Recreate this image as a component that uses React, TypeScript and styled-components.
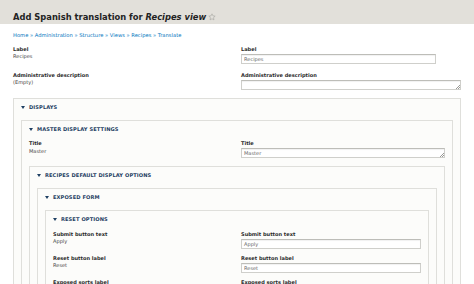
import React from "react";
import styled, { createGlobalStyle } from "styled-components";

const GlobalStyle = createGlobalStyle`
  html, body { margin: 0; padding: 0; background: #ffffff; }
  body { font-family: "DejaVu Sans", "Liberation Sans", sans-serif; color: #222; }
  * { box-sizing: border-box; }
`;

const Header = styled.header`
  background: #e2e0da;
  height: 24px;
  padding: 12px 13px 0;
`;

const Title = styled.h1`
  margin: 0;
  font-size: 8.35px;
  line-height: 10px;
  font-weight: bold;
  color: #232323;
  display: flex;
  align-items: center;
  gap: 2px;
  white-space: nowrap;
  em { font-style: italic; }
`;

const Star = styled.svg`
  width: 8px;
  height: 8px;
  margin-top: -1px;
`;

const Main = styled.main`
  padding: 7.5px 13px 0;
`;

const Breadcrumb = styled.nav`
  font-size: 5.2px;
  line-height: 7px;
  color: #0074bd;
  margin-bottom: 7px;
  white-space: nowrap;
`;

const Row = styled.div<{ $left: number; $gap: number }>`
  display: grid;
  grid-template-columns: ${(p) => p.$left}px 1fr;
  margin-bottom: ${(p) => p.$gap}px;
`;

const Cell = styled.div`
  display: flex;
  flex-direction: column;
  min-width: 0;
`;

const Label = styled.div`
  font-size: 5.05px;
  line-height: 7px;
  font-weight: bold;
  color: #2a2a2a;
  white-space: nowrap;
`;

const Value = styled.div`
  font-size: 5.05px;
  line-height: 7px;
  margin-top: 0.5px;
  color: #444;
  white-space: nowrap;
`;

const Field = styled.div<{ $width?: number; $grip?: boolean }>`
  position: relative;
  margin-top: 1px;
  height: 10px;
  width: ${(p) => (p.$width ? `${p.$width}px` : "100%")};
  border: 1px solid #cfcfcb;
  border-top-color: #bdbdb8;
  background: #fff;
  box-shadow: inset 0 1px 1px rgba(0, 0, 0, 0.06);
  font-size: 5.05px;
  line-height: 8px;
  padding: 0 2px;
  color: #666;
  white-space: nowrap;
  ${(p) =>
    p.$grip
      ? `&::after {
    content: "";
    position: absolute;
    right: 0;
    bottom: 0;
    width: 4px;
    height: 4px;
    background: linear-gradient(135deg, transparent 0 45%, #9a9a96 45% 58%, transparent 58% 70%, #9a9a96 70% 83%, transparent 83%);
  }`
      : ""}
`;

const Box = styled.section<{ $nested?: boolean }>`
  border: 1px solid #dfdfdb;
  background: #fcfcfa;
  padding: 0 7px 8px;
  margin-top: ${(p) => (p.$nested ? "1.5px" : "0")};
`;

const Summary = styled.div`
  display: flex;
  align-items: center;
  gap: 4px;
  padding: 5px 0 0 0;
  font-size: 5.1px;
  line-height: 7px;
  font-weight: bold;
  letter-spacing: 0.1px;
  text-transform: uppercase;
  color: #1f4063;
  white-space: nowrap;
`;

const Arrow = styled.span`
  width: 0;
  height: 0;
  border-left: 2px solid transparent;
  border-right: 2px solid transparent;
  border-top: 3px solid #1f4063;
`;

const Body = styled.div`
  padding-top: 7.5px;
`;

const RIGHT_COL = 241;

type FieldRowProps = {
  left: number;
  gap: number;
  label: string;
  value: string;
  fieldValue?: string;
  fieldWidth?: number;
  grip?: boolean;
};

function FieldRow({ left, gap, label, value, fieldValue, fieldWidth, grip }: FieldRowProps) {
  return (
    <Row $left={RIGHT_COL - left} $gap={gap}>
      <Cell>
        <Label>{label}</Label>
        <Value>{value}</Value>
      </Cell>
      <Cell>
        <Label>{label}</Label>
        <Field $width={fieldWidth} $grip={grip}>
          {fieldValue}
        </Field>
      </Cell>
    </Row>
  );
}

function Details({
  title,
  nested,
  children,
}: {
  title: string;
  nested?: boolean;
  children?: React.ReactNode;
}) {
  return (
    <Box $nested={nested}>
      <Summary>
        <Arrow />
        {title}
      </Summary>
      <Body>{children}</Body>
    </Box>
  );
}

export default function App() {
  return (
    <>
      <GlobalStyle />
      <Header>
        <Title>
          <span>
            Add Spanish translation for <em>Recipes view</em>
          </span>
          <Star viewBox="0 0 24 24">
            <path
              d="M12 2.5l2.9 6.1 6.6.8-4.9 4.6 1.3 6.6L12 17.3l-5.9 3.3 1.3-6.6-4.9-4.6 6.6-.8z"
              fill="none"
              stroke="#a9a9a4"
              strokeWidth="2"
              strokeLinejoin="round"
            />
          </Star>
        </Title>
      </Header>
      <Main>
        <Breadcrumb>
          Home » Administration » Structure » Views » Recipes » Translate
        </Breadcrumb>
        <FieldRow left={13} gap={8} label="Label" value="Recipes" fieldValue="Recipes" fieldWidth={195} />
        <FieldRow left={13} gap={8} label="Administrative description" value="(Empty)" grip />
        <Details title="Displays">
          <Details title="Master display settings" nested>
            <FieldRow left={29} gap={8} label="Title" value="Master" fieldValue="Master" grip />
            <Details title="Recipes default display options" nested>
              <Details title="Exposed form" nested>
                <Details title="Reset options" nested>
                  <FieldRow left={53} gap={6} label="Submit button text" value="Apply" fieldValue="Apply" />
                  <FieldRow left={53} gap={6} label="Reset button label" value="Reset" fieldValue="Reset" />
                  <FieldRow left={53} gap={6} label="Exposed sorts label" value="Sort by" fieldValue="Sort by" />
                </Details>
              </Details>
            </Details>
          </Details>
        </Details>
      </Main>
    </>
  );
}
